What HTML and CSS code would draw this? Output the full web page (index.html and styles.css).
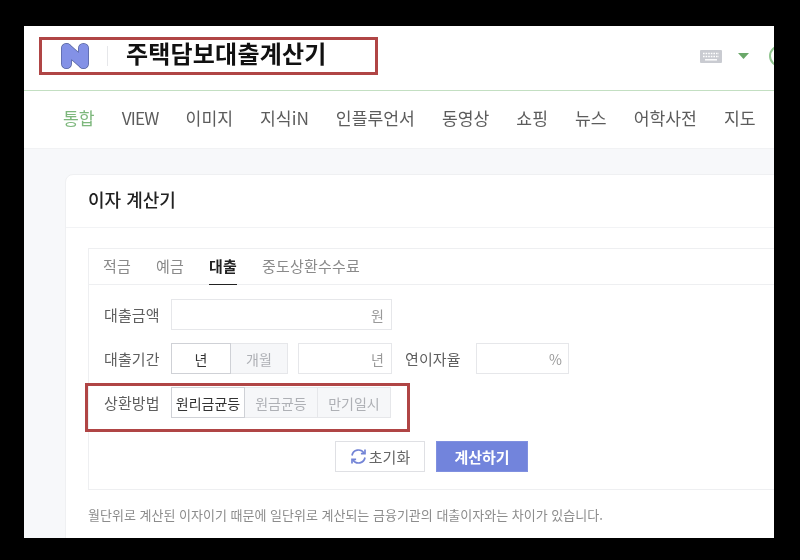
FILE: index.html
```html
<!DOCTYPE html>
<html lang="ko">
<head>
<meta charset="utf-8">
<title>주택담보대출계산기</title>
<link rel="stylesheet" href="styles.css">
</head>
<body>
<div class="screen">
  <header class="top">
    <svg class="logo" width="28" height="26" viewBox="0 0 28 26">
      <path d="M5.5 5.5V20.5M5.5 5.5L22.5 20.5M22.5 20.5V5.5" fill="none" stroke="#56649f" stroke-width="11" stroke-linecap="round" stroke-linejoin="round"/>
      <path d="M5.5 5.5V20.5M5.5 5.5L22.5 20.5M22.5 20.5V5.5" fill="none" stroke="#8391e6" stroke-width="9.6" stroke-linecap="round" stroke-linejoin="round"/>
    </svg>
    <span class="sep"></span>
    <h1 class="query">주택담보대출계산기</h1>
    <div class="tools">
      <svg class="kbd" width="22" height="13" viewBox="0 0 22 13">
        <rect width="22" height="13" rx="1" fill="#c9cbd1"/>
        <path d="M3 3.5H19M3 6.5H19" stroke="#fff" stroke-width="1.4" stroke-dasharray="1.6 1"/>
        <path d="M5 9.8H17" stroke="#fff" stroke-width="1.4"/>
      </svg>
      <svg class="caret" width="11" height="6" viewBox="0 0 11 6"><path d="M0 0H11L5.5 6Z" fill="#6aa869"/></svg>
      <span class="avatar"></span>
    </div>
  </header>
  <nav class="nav">
    <a class="on">통합</a><a class="latin">VIEW</a><a>이미지</a><a>지식iN</a><a>인플루언서</a><a>동영상</a><a>쇼핑</a><a>뉴스</a><a>어학사전</a><a>지도</a>
  </nav>
  <main class="main">
    <section class="card">
      <h2 class="card-title">이자 계산기</h2>
      <div class="box">
        <div class="tabs">
          <span>적금</span><span>예금</span><span class="active">대출</span><span>중도상환수수료</span>
        </div>
        <div class="form">
          <div class="row">
            <label class="label">대출금액</label>
            <div class="field wide">원</div>
          </div>
          <div class="row">
            <label class="label">대출기간</label>
            <div class="seg">
              <span class="opt sel y">년</span><span class="opt m">개월</span>
            </div>
            <div class="field short">년</div>
            <label class="label rate">연이자율</label>
            <div class="field pct">%</div>
          </div>
          <div class="row">
            <label class="label">상환방법</label>
            <div class="seg">
              <span class="opt sel w">원리금균등</span><span class="opt w">원금균등</span><span class="opt w">만기일시</span>
            </div>
          </div>
        </div>
        <div class="actions">
          <button class="btn reset">
            <svg width="17" height="17" viewBox="0 0 17 17" fill="none" stroke="#7384d6" stroke-width="1.7">
              <path d="M2 7.5A6.6 6.6 0 0 1 14 5"/><path d="M15 1.5V5.6H10.9"/>
              <path d="M15 9.5A6.6 6.6 0 0 1 3 12"/><path d="M2 15.5V11.4H6.1"/>
            </svg>초기화
          </button>
          <button class="btn calc">계산하기</button>
        </div>
      </div>
      <p class="note">월단위로 계산된 이자이기 때문에 일단위로 계산되는 금융기관의 대출이자와는 차이가 있습니다.</p>
    </section>
  </main>
  <div class="mark mark-a"></div>
  <div class="mark mark-b"></div>
</div>
</body>
</html>
```
FILE: styles.css
```css
* { box-sizing: border-box; }
html, body { margin: 0; height: 100%; background: #000; overflow: hidden; }
body { padding: 26px 0 0 24px; font-family: "Noto Sans CJK KR", "Noto Sans", sans-serif; }
.screen { position: relative; width: 750px; height: 512px; background: #f7f8fa; overflow: hidden; filter: blur(0.35px); }
.top { display: flex; align-items: center; height: 65px; padding: 0 0 5px 37px; background: #fff; border-bottom: 1px solid #c3dfc2; }
.logo { display: block; flex: none; }
.sep { width: 1px; height: 20px; margin: 0 18px; background: #e6e7ea; }
.query { margin: 0; padding-bottom: 6px; font-size: 24px; font-weight: 700; letter-spacing: 0.2px; color: #111; line-height: 1; }
.tools { display: flex; align-items: center; margin-left: auto; margin-right: -17px; padding-top: 1px; }
.kbd { margin-right: 16px; }
.caret { margin-right: 20px; }
.avatar { width: 22px; height: 22px; border: 2px solid #8fc48e; border-radius: 50%; background: #fff; }
.nav { display: flex; gap: 27px; height: 58px; padding: 0 0 4px 39px; align-items: center; background: #fff; font-size: 17.2px; color: #5c5c5c; white-space: nowrap; border-bottom: 1px solid #f1f2f4; }
.nav .on { color: #7db77c; }
.nav .latin { letter-spacing: -0.8px; }
.main { padding: 25px 0 0 41px; }
.card { width: 720px; height: 400px; background: #fff; border: 1px solid #eff0f2; border-radius: 8px 0 0 0; }
.card-title { margin: 0; height: 53px; padding: 0 0 4px 22px; display: flex; align-items: center; font-size: 18px; font-weight: 500; color: #222; border-bottom: 1px solid #f2f3f5; }
.box { width: 687px; margin: 20px 0 0 22px; padding-bottom: 17px; border: 1px solid #eeeff1; }
.tabs { display: flex; gap: 25px; height: 36px; padding-left: 14px; font-size: 15px; letter-spacing: 0.2px; color: #8a8a8a; border-bottom: 1px solid #eeeff1; }
.tabs span { display: block; line-height: 33px; height: 36px; }
.tabs .active { color: #222; font-weight: 700; border-bottom: 1px solid #222; }
.form { display: flex; flex-direction: column; gap: 13px; padding: 14px 0 0 15px; }
.row { display: flex; align-items: center; height: 31px; }
.label { flex: none; width: 67px; font-size: 15px; letter-spacing: 0.1px; color: #5f5f5f; }
.field { height: 31px; padding-right: 7px; border: 1px solid #e6e7ea; background: #fff; text-align: right; line-height: 31px; font-size: 14px; color: #999; }
.wide { width: 221px; }
.short { width: 94px; margin-left: 10px; }
.label.rate { width: 71px; margin-left: 13px; }
.pct { width: 93px; padding-right: 6px; }
.seg { display: flex; }
.opt { height: 31px; border: 1px solid #e6e7ea; background: #f6f7f9; text-align: center; line-height: 30px; font-size: 14px; color: #aeb0b5; white-space: nowrap; }
.opt + .opt { border-left: 0; }
.opt.sel { background: #fff; color: #333; border-color: #cfd1d6; }
.y { width: 60px; }
.m { width: 57px; }
.w { width: 73px; }
.w:first-child { width: 74px; }
.actions { display: flex; justify-content: center; gap: 11px; margin-top: 23px; }
.btn { display: flex; align-items: center; justify-content: center; height: 31px; padding: 0; font-family: inherit; font-size: 15px; border-radius: 0; cursor: pointer; }
.reset { width: 90px; gap: 2px; background: #fff; border: 1px solid #dfe0e4; color: #666; }
.calc { width: 92px; background: #7284dc; border: 1px solid #8090e0; color: #fff; font-weight: 700; letter-spacing: 0; }
.note { margin: 16px 0 0 22px; font-size: 13px; line-height: 18px; color: #8c8c8c; white-space: nowrap; }
.mark { position: absolute; border: 3px solid #b04545; }
.mark-a { left: 15px; top: 11px; width: 339px; height: 38px; }
.mark-b { left: 61px; top: 357px; width: 325px; height: 49px; }
```
